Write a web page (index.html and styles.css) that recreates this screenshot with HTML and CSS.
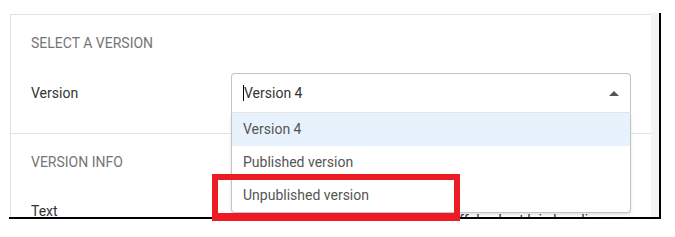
FILE: index.html
```
<!DOCTYPE html>
<html lang="en">
<head>
  <meta charset="UTF-8">
  <meta name="viewport" content="width=device-width, initial-scale=1.0">
  <title>Select a version</title>
  <link rel="stylesheet" href="styles.css">
</head>
<body>
  <div class="frame">
    <div class="page">
      <div class="panel">
        <section class="section">
          <h2 class="section-title">Select a version</h2>
          <div class="row">
            <span class="label">Version</span>
            <div class="select open">
              <div class="select-value">
                <span class="text-cursor"></span>Version 4
                <svg class="select-arrow" width="10" height="5" viewBox="0 0 10 5"><polygon points="0,5 5,0 10,5" fill="#555"/></svg>
              </div>
              <ul class="options">
                <li class="option active">Version 4</li>
                <li class="option">Published version</li>
                <li class="option">Unpublished version</li>
              </ul>
            </div>
          </div>
        </section>
        <section class="section">
          <h2 class="section-title">Version info</h2>
          <div class="row row-top">
            <span class="label label-text">Text</span>
            <p class="value">bacon ipsum dolor amet shoulder buffalo short loin boudin,</p>
          </div>
        </section>
      </div>
    </div>
    <div class="scroll-track"></div>
  </div>

  <!-- annotation -->
  <div class="highlight"></div>
</body>
</html>
```

FILE: styles.css
```
body {
  margin: 0;
  padding: 0;
  background: #fff;
  font-family: Roboto, "Liberation Sans", Arial, sans-serif;
  font-size: 14px;
  color: #333;
}
.frame {
  display: flex;
  margin: 13px 0 0 9px;
  width: 650px;
  height: 204px;
  border-right: 2px solid #000;
  border-bottom: 2px solid #000;
  overflow: hidden;
}
.page {
  flex: 1;
  padding: 1px 0 0 1px;
}
.scroll-track {
  width: 9px;
  background: #f4f4f4;
}
.panel {
  background: #fff;
  border: 1px solid #e2e2e2;
  border-right: none;
}
.section {
  padding: 18px 20px 20px;
  border-bottom: 1px solid #e2e2e2;
}
.section-title {
  margin: 0 0 20px;
  font-size: 14px;
  font-weight: 400;
  line-height: 20px;
  text-transform: uppercase;
  color: #757575;
}
.row {
  display: flex;
  align-items: center;
}
.row-top {
  align-items: flex-start;
}
.label {
  width: 200px;
  line-height: 20px;
  color: #333;
}
.label-text {
  padding-top: 9px;
}
.select {
  position: relative;
  width: 400px;
  z-index: 10;
}
.select-value {
  display: flex;
  align-items: center;
  box-sizing: border-box;
  height: 40px;
  padding: 0 11px;
  border: 1px solid #c4c4c4;
  border-bottom-color: #e6e6e6;
  border-radius: 4px 4px 0 0;
  background: #fff;
  color: #333;
}
.text-cursor {
  display: inline-block;
  width: 0;
  height: 16px;
  border-left: 1px solid #000;
}
.select-arrow {
  margin-left: auto;
}
.options {
  position: absolute;
  top: 100%;
  left: 0;
  right: 0;
  margin: 0;
  padding: 0;
  list-style: none;
  background: #fff;
  border: 1px solid #c4c4c4;
  border-top: none;
  border-radius: 0 0 4px 4px;
  box-shadow: 0 2px 3px rgba(0, 0, 0, 0.12);
}
.option {
  height: 33px;
  line-height: 33px;
  padding: 0 11px;
  color: #555;
}
.option.active {
  background: #e8f2fd;
}
.value {
  margin: 0;
  padding-top: 18px;
  line-height: 20px;
  color: #333;
}
.highlight {
  position: absolute;
  z-index: 20;
  left: 212px;
  top: 174px;
  width: 248px;
  height: 47px;
  box-sizing: border-box;
  border: 6px solid #ed1c24;
  border-bottom-width: 8px;
}
```
